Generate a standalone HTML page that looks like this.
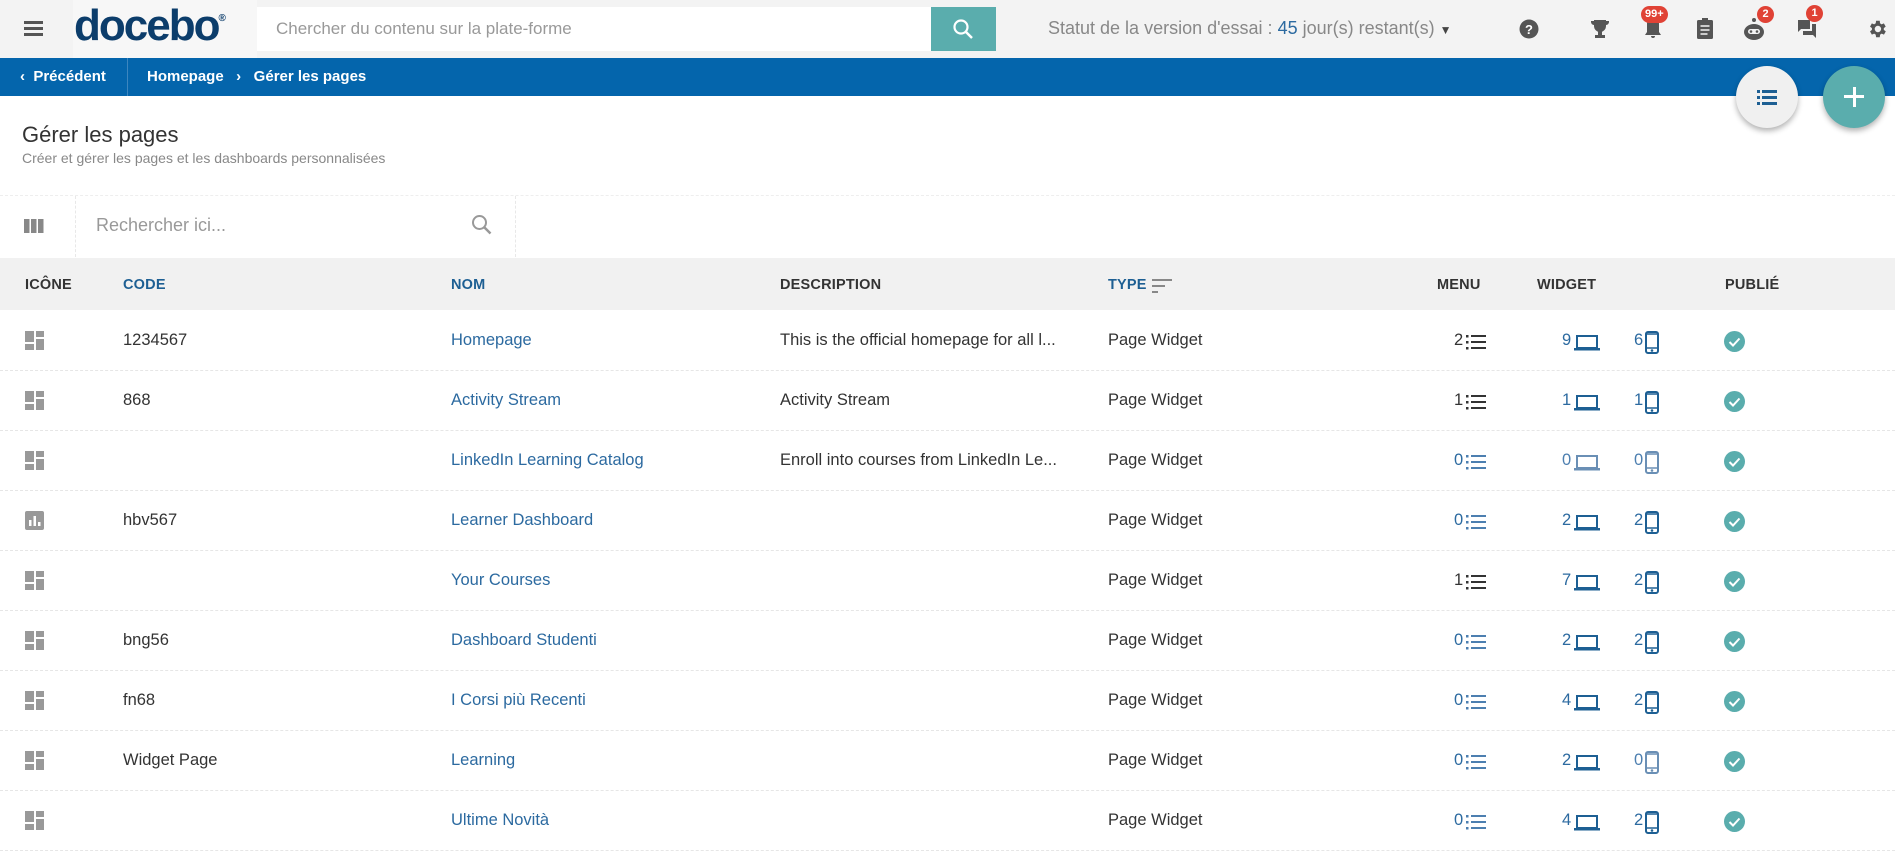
<!DOCTYPE html>
<html><head><meta charset="utf-8"><style>
*{margin:0;padding:0;box-sizing:border-box}
body{width:1895px;height:838px;overflow:hidden;background:#fff;font-family:"Liberation Sans",sans-serif;color:#333;position:relative}
.abs{position:absolute}
#top{position:absolute;left:0;top:0;width:1895px;height:58px;background:#f3f3f3}
#bc{position:absolute;left:0;top:58px;width:1895px;height:38px;background:#0465ac;color:#fff;font-size:15px;font-weight:bold}
.hdr{position:absolute;top:258px;left:0;width:1895px;height:52px;background:#f1f1f1}
.h{position:absolute;top:277px;font-size:14.5px;font-weight:bold;color:#333;letter-spacing:.2px}
.h.b{color:#1d5f93}
.row{position:absolute;left:0;width:1895px;height:60px;border-bottom:1px dashed #e6e6e6}
.c{position:absolute;top:20px;font-size:16.5px;color:#333;white-space:nowrap}
.lnk{color:#2c6aa0}
.blue{color:#2c6aa0}
.badge{position:absolute;background:#e04235;color:#fff;font-size:11px;font-weight:bold;border-radius:9px;height:17px;line-height:17px;text-align:center;padding:0 4px}
</style></head><body>
<div id="top"></div>
<!-- hamburger -->
<div class="abs" style="left:24px;top:21px;width:19px;height:2.5px;background:#555;box-shadow:0 6px 0 #555,0 12px 0 #555"></div>
<div class="abs" style="left:73px;top:0;width:184px;height:58px;background:#f7f7f7"></div>
<div class="abs" style="left:74px;top:1px;font-size:44px;font-weight:bold;color:#0c3d6b;letter-spacing:-2px;font-family:'Liberation Sans Narrow','Liberation Sans',sans-serif">docebo<span style="font-size:10px;vertical-align:top;position:relative;top:12px">®</span></div>
<div class="abs" style="left:257px;top:7px;width:674px;height:44px;background:#fff"></div>
<div class="abs" style="left:276px;top:19px;font-size:17px;color:#999">Chercher du contenu sur la plate-forme</div>
<div class="abs" style="left:931px;top:7px;width:65px;height:44px;background:#5aadad"></div>
<svg class="abs" style="left:951px;top:17px" width="24" height="24" viewBox="0 0 24 24"><circle cx="10" cy="10" r="6.5" fill="none" stroke="#fff" stroke-width="2.2"/><path d="M15 15l6 6" stroke="#fff" stroke-width="2.5"/></svg>
<div class="abs" style="left:1048px;top:18px;font-size:18px;color:#888">Statut de la version d'essai : <span style="color:#2c6aa0">45</span> jour(s) restant(s) <span style="font-size:12px;color:#444">▼</span></div>
<!-- icons -->
<svg class="abs" style="left:1519px;top:19px" width="20" height="20"><circle cx="10" cy="10" r="9.5" fill="#555"/><text x="10" y="15" font-size="13" font-weight="bold" fill="#fff" text-anchor="middle" font-family="Liberation Sans">?</text></svg>
<svg class="abs" style="left:1590px;top:18px" width="20" height="22" viewBox="0 0 20 22"><path d="M4 2h12v6a6 6 0 0 1-12 0z M1 3h3v4a3 3 0 0 1-3-3z M19 3h-3v4a3 3 0 0 0 3-3z M8 13h4v4h3v3H5v-3h3z" fill="#555"/></svg>
<svg class="abs" style="left:1643px;top:18px" width="20" height="22" viewBox="0 0 20 22"><path d="M4 6a6 6 0 0 1 12 0v8l2 3H2l2-3z M8 18h4a2 2 0 0 1-4 0z" fill="#555"/></svg>
<svg class="abs" style="left:1696px;top:17px" width="18" height="23" viewBox="0 0 18 23"><rect x="1" y="3" width="16" height="19" rx="1.5" fill="#555"/><rect x="6" y="1" width="6" height="4" fill="#555"/><path d="M4.5 9h9M4.5 13h9M4.5 17h7" stroke="#f3f3f3" stroke-width="1.6"/></svg>
<svg class="abs" style="left:1743px;top:17px" width="22" height="24" viewBox="0 0 22 24"><circle cx="11" cy="3" r="2" fill="#555"/><ellipse cx="11" cy="15" rx="10" ry="8" fill="#555"/><rect x="5" y="12" width="12" height="5" rx="2.5" fill="#f3f3f3"/><circle cx="8" cy="14.5" r="1.3" fill="#555"/><circle cx="14" cy="14.5" r="1.3" fill="#555"/></svg>
<svg class="abs" style="left:1797px;top:19px" width="20" height="20" viewBox="0 0 20 20"><path d="M1 1h12v9H4l-3 3z M15 5h4v14l-3-3H6v-4h9z" fill="#555"/></svg>
<svg class="abs" style="left:1866px;top:18px" width="22" height="22" viewBox="0 0 24 24"><path fill="#555" d="M19.4 13a7.5 7.5 0 0 0 0-2l2.1-1.6-2-3.5-2.5 1a7 7 0 0 0-1.7-1L15 3h-4l-.4 2.9a7 7 0 0 0-1.7 1l-2.5-1-2 3.5L6.5 11a7.5 7.5 0 0 0 0 2l-2.1 1.6 2 3.5 2.5-1a7 7 0 0 0 1.7 1L11 21h4l.4-2.9a7 7 0 0 0 1.7-1l2.5 1 2-3.5zM13 15.5a3.5 3.5 0 1 1 0-7 3.5 3.5 0 0 1 0 7z"/></svg>
<div class="badge" style="left:1641px;top:6px">99+</div>
<div class="badge" style="left:1757px;top:6px;width:17px;padding:0">2</div>
<div class="badge" style="left:1806px;top:5px;width:17px;padding:0">1</div>

<div id="bc">
<div class="abs" style="left:20px;top:10px">‹&nbsp; Précédent</div>
<div class="abs" style="left:127px;top:0;width:1px;height:38px;background:#3d86bf"></div>
<div class="abs" style="left:147px;top:10px">Homepage &nbsp;&nbsp;›&nbsp;&nbsp; Gérer les pages</div>
</div>
<!-- FABs -->
<div class="abs" style="left:1736px;top:66px;width:62px;height:62px;border-radius:50%;background:#f0f0f0;box-shadow:0 3px 6px rgba(0,0,0,.3)"></div>
<svg class="abs" style="left:1757px;top:89px" width="20" height="16"><g fill="#1d5f93"><rect x="0" y="1" width="3" height="3"/><rect x="5" y="1" width="15" height="3"/><rect x="0" y="7" width="3" height="3"/><rect x="5" y="7" width="15" height="3"/><rect x="0" y="13" width="3" height="3"/><rect x="5" y="13" width="15" height="3"/></g></svg>
<div class="abs" style="left:1823px;top:66px;width:62px;height:62px;border-radius:50%;background:#5aadad;box-shadow:0 3px 6px rgba(0,0,0,.3)"></div>
<div class="abs" style="left:1844px;top:85px;width:20px;height:3px;background:#fff;top:95px"></div>
<div class="abs" style="left:1852.5px;top:86.5px;width:3px;height:20px;background:#fff"></div>

<div class="abs" style="left:22px;top:122px;font-size:22px;color:#333">Gérer les pages</div>
<div class="abs" style="left:22px;top:150px;font-size:14px;color:#888">Créer et gérer les pages et les dashboards personnalisées</div>

<div class="abs" style="left:0;top:195px;width:1895px;border-top:1px dashed #eee"></div>
<div class="abs" style="left:75px;top:196px;height:61px;border-left:1px dashed #e8e8e8"></div>
<div class="abs" style="left:515px;top:196px;height:61px;border-left:1px dashed #e8e8e8"></div>
<svg class="abs" style="left:24px;top:219px" width="20" height="14"><g fill="#888"><rect x="0" y="0" width="5.5" height="14"/><rect x="7" y="0" width="5.5" height="14"/><rect x="14" y="0" width="5.5" height="14"/></g></svg>
<div class="abs" style="left:96px;top:215px;font-size:18px;color:#999">Rechercher ici...</div>
<svg class="abs" style="left:470px;top:213px" width="24" height="24"><circle cx="9.5" cy="9.5" r="6.5" fill="none" stroke="#999" stroke-width="2"/><path d="M14.5 14.5l6 6" stroke="#999" stroke-width="2.5"/></svg>

<div class="hdr"></div>
<div class="h" style="left:25px">ICÔNE</div>
<div class="h b" style="left:123px">CODE</div>
<div class="h b" style="left:451px">NOM</div>
<div class="h" style="left:780px">DESCRIPTION</div>
<div class="h b" style="left:1108px">TYPE</div>
<svg class="abs" style="left:1152px;top:279px" width="20" height="14"><g fill="#888"><rect x="0" y="0" width="20" height="2"/><rect x="0" y="6" width="13" height="2"/><rect x="0" y="12" width="6" height="2"/></g></svg>
<div class="h" style="left:1437px">MENU</div>
<div class="h" style="left:1537px">WIDGET</div>
<div class="h" style="left:1725px">PUBLIÉ</div>

<svg width="0" height="0" style="position:absolute"><defs>
<g id="dash"><rect x="0" y="0" width="9" height="11" fill="#999"/><rect x="11" y="0" width="8" height="6" fill="#999"/><rect x="0" y="13" width="9" height="6" fill="#999"/><rect x="11" y="8" width="8" height="11" fill="#999"/></g>
<g id="chart"><rect x="0" y="0" width="19" height="19" rx="2" fill="#999"/><rect x="4" y="9" width="2.5" height="6" fill="#fff"/><rect x="8.5" y="5" width="2.5" height="10" fill="#fff"/><rect x="13" y="11" width="2.5" height="4" fill="#fff"/></g>
</defs></svg>

<div id="rows"></div>
<script>
var d=[["dash","1234567","Homepage","This is the official homepage for all l...",2,9,6,1],
["dash","868","Activity Stream","Activity Stream",1,1,1,1],
["dash","","LinkedIn Learning Catalog","Enroll into courses from LinkedIn Le...",0,0,0,0],
["chart","hbv567","Learner Dashboard","",0,2,2,1],
["dash","","Your Courses","",1,7,2,1],
["dash","bng56","Dashboard Studenti","",0,2,2,1],
["dash","fn68","I Corsi più Recenti","",0,4,2,1],
["dash","Widget Page","Learning","",0,2,0,1],
["dash","","Ultime Novità","",0,4,2,1]];
var h="";
d.forEach(function(r,i){
var top=311+i*60;
var mc=r[4]?"#333":"#2c6aa0", lc=r[5]?"#1d5f93":"#6a8fb5", pc=r[6]?"#1d5f93":"#6a8fb5";
var mcol=r[4]?"#333":"#2c6aa0";
h+='<div class="row" style="top:'+top+'px">'+
'<svg class="abs" style="left:25px;top:20px" width="19" height="19"><use href="#'+r[0]+'"/></svg>'+
'<div class="c" style="left:123px">'+r[1]+'</div>'+
'<div class="c lnk" style="left:451px">'+r[2]+'</div>'+
'<div class="c" style="left:780px">'+r[3]+'</div>'+
'<div class="c" style="left:1108px">Page Widget</div>'+
'<div class="c" style="left:1454px;color:'+mcol+'">'+r[4]+'</div>'+
'<svg class="abs" style="left:1466px;top:23px" width="20" height="16"><g fill="'+(r[4]?"#333":"#4d7fb0")+'"><rect x="0" y="1" width="2.5" height="2.5"/><rect x="5" y="1" width="15" height="2"/><rect x="0" y="7" width="2.5" height="2.5"/><rect x="5" y="7" width="15" height="2"/><rect x="0" y="13" width="2.5" height="2.5"/><rect x="5" y="13" width="15" height="2"/></g></svg>'+
'<div class="c" style="left:1562px;color:'+(r[5]?"#2c6aa0":"#4d7fb0")+'">'+r[5]+'</div>'+
'<svg class="abs" style="left:1574px;top:24px" width="26" height="16"><rect x="3" y="1" width="20" height="12" fill="none" stroke="'+lc+'" stroke-width="2"/><rect x="0" y="13" width="26" height="2.5" fill="'+lc+'"/></svg>'+
'<div class="c" style="left:1634px;color:'+(r[6]?"#2c6aa0":"#4d7fb0")+'">'+r[6]+'</div>'+
'<svg class="abs" style="left:1645px;top:20px" width="14" height="23"><rect x="1" y="1" width="12" height="21" rx="2" fill="none" stroke="'+pc+'" stroke-width="2"/><rect x="1" y="3" width="12" height="14" fill="none" stroke="'+pc+'" stroke-width="1.5"/><circle cx="7" cy="19.5" r="1.3" fill="'+pc+'"/></svg>'+
'<svg class="abs" style="left:1724px;top:20px" width="21" height="21"><circle cx="10.5" cy="10.5" r="10.5" fill="#5aadad"/><path d="M5.5 11l3.5 3.5 6.5-7" fill="none" stroke="#fff" stroke-width="2"/></svg>'+
'</div>';
});
document.getElementById("rows").innerHTML=h;
</script>
</body></html>
